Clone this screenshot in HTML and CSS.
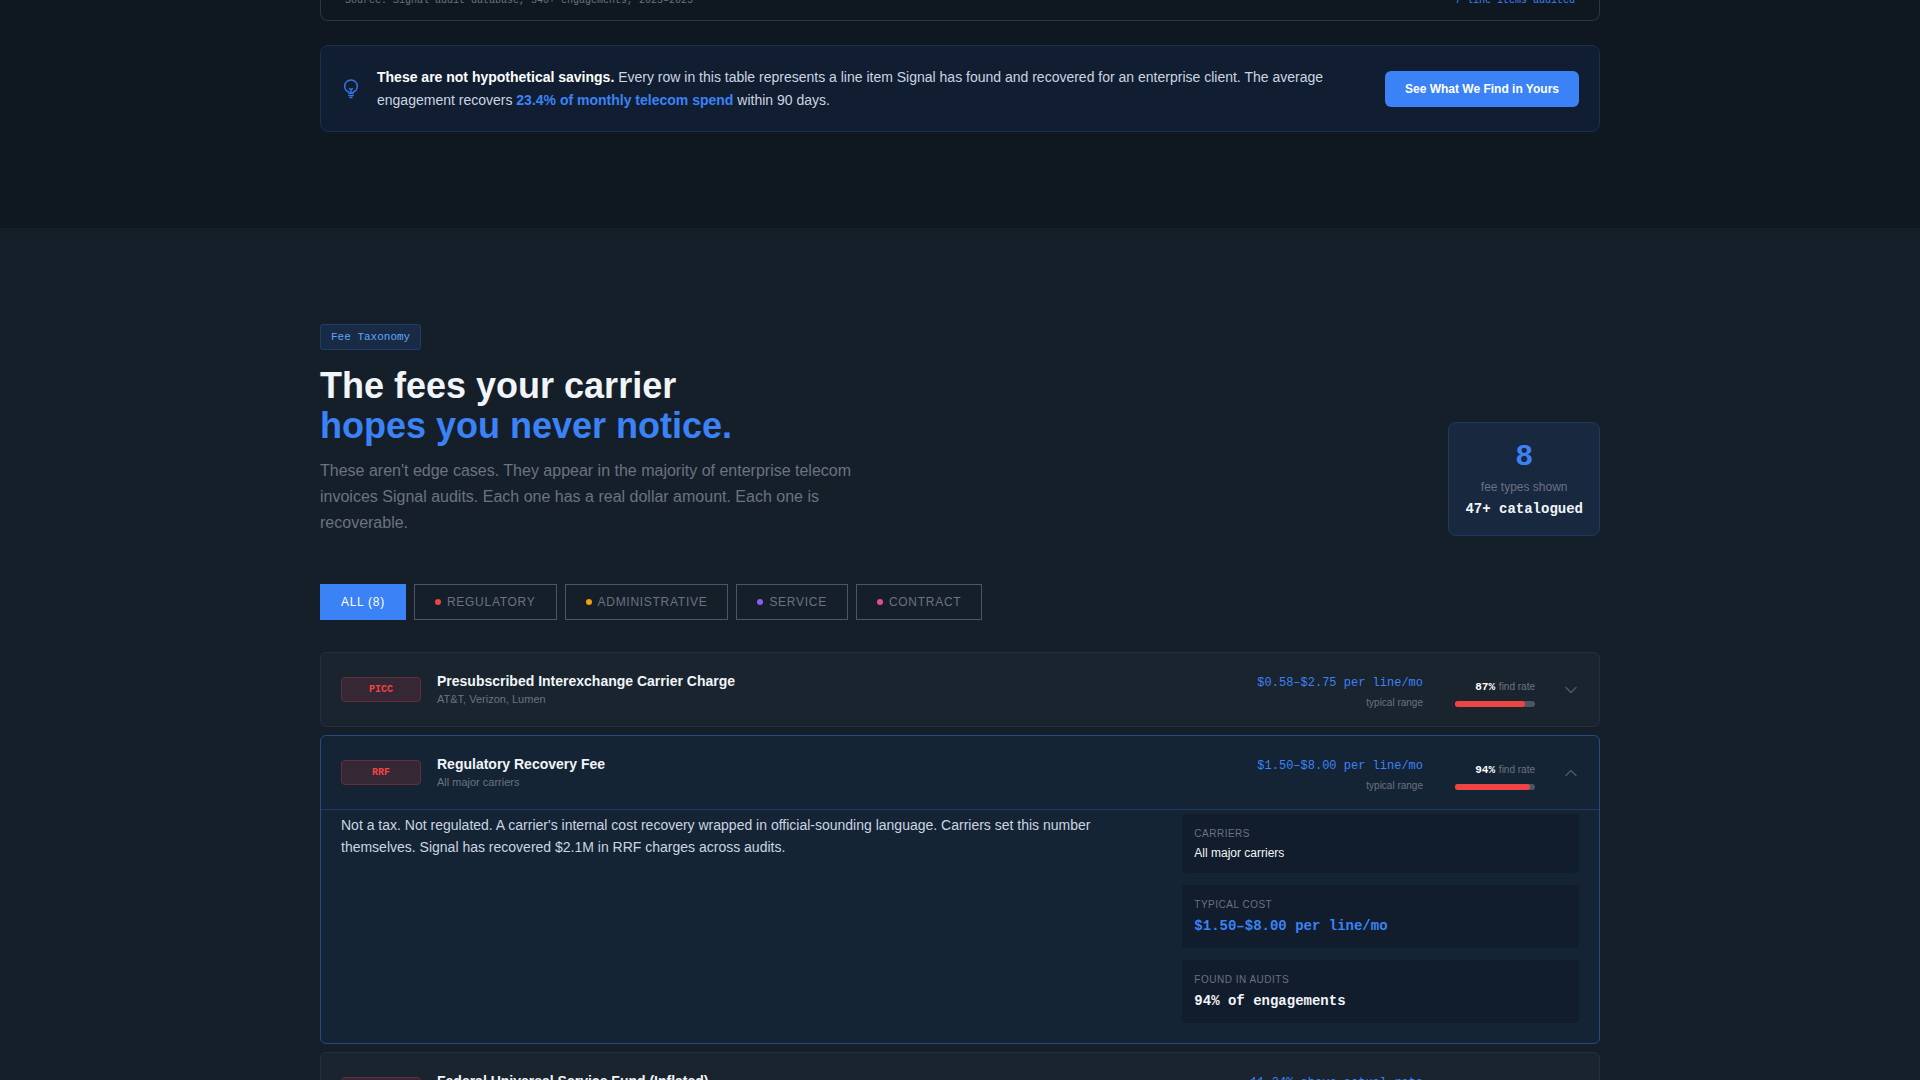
FILE: index.html
```html
<!DOCTYPE html>
<html lang="en">
<head>
    <meta charset="UTF-8">
    <meta name="viewport" content="width=device-width, initial-scale=1.0">
    <title>Signal - Fee Taxonomy</title>
    <link rel="stylesheet" href="styles.css">
</head>
<body>
    <section class="audit">
        <div class="container">
            <div class="table-footer">
                <span>Source: Signal audit database, 340+ engagements, 2023–2025</span>
                <span class="table-count">7 line items audited</span>
            </div>
            <div class="callout">
                <svg class="bulb" viewBox="0 0 20 22" fill="none" stroke="currentColor" stroke-width="1.5" stroke-linecap="round" stroke-linejoin="round" aria-hidden="true">
                    <path d="M7.800 15.200v-1.200C5.200 13 3.700 10.800 3.700 8.200a6.300 6.300 0 1 1 12.600 0c0 2.600-1.500 4.800-4.100 5.800v1.200z"/>
                    <path d="M8.600 10.600L10 11.600l1.400-1M10 11.800v3.400M7.800 17.400h4.400M9 19.600h2"/>
                </svg>
                <p><strong>These are not hypothetical savings.</strong> Every row in this table represents a line item Signal has found and recovered for an enterprise client. The average engagement recovers <b>23.4% of monthly telecom spend</b> within 90 days.</p>
                <button class="cta">See What We Find in Yours</button>
            </div>
        </div>
    </section>

    <section class="taxonomy">
        <div class="container">
            <div class="header">
                <div class="intro">
                    <span class="tag">Fee Taxonomy</span>
                    <h2>The fees your carrier<br><span>hopes you never notice.</span></h2>
                    <p>These aren't edge cases. They appear in the majority of enterprise telecom invoices Signal audits. Each one has a real dollar amount. Each one is recoverable.</p>
                </div>
                <div class="stat">
                    <div class="stat-number">8</div>
                    <div class="stat-label">fee types shown</div>
                    <div class="stat-total">47+ catalogued</div>
                </div>
            </div>

            <div class="filters">
                <button class="filter active">All (8)</button>
                <button class="filter"><i class="dot red"></i>Regulatory</button>
                <button class="filter"><i class="dot amber"></i>Administrative</button>
                <button class="filter"><i class="dot purple"></i>Service</button>
                <button class="filter"><i class="dot pink"></i>Contract</button>
            </div>

            <div class="fees">
                <div class="fee">
                    <button class="fee-head" aria-expanded="false">
                        <span class="code">PICC</span>
                        <span class="fee-name">
                            <span class="name">Presubscribed Interexchange Carrier Charge</span>
                            <span class="carriers">AT&amp;T, Verizon, Lumen</span>
                        </span>
                        <span class="range">
                            <span class="cost">$0.58–$2.75 per line/mo</span>
                            <span class="small">typical range</span>
                        </span>
                        <span class="rate">
                            <span class="small"><b>87%</b> find rate</span>
                            <span class="bar"><span class="fill" style="width: 87%"></span></span>
                        </span>
                        <svg class="chevron" viewBox="0 0 16 16" aria-hidden="true"><path d="M3 5.500l5 5 5-5"/></svg>
                    </button>
                </div>

                <div class="fee open">
                    <button class="fee-head" aria-expanded="true">
                        <span class="code">RRF</span>
                        <span class="fee-name">
                            <span class="name">Regulatory Recovery Fee</span>
                            <span class="carriers">All major carriers</span>
                        </span>
                        <span class="range">
                            <span class="cost">$1.50–$8.00 per line/mo</span>
                            <span class="small">typical range</span>
                        </span>
                        <span class="rate">
                            <span class="small"><b>94%</b> find rate</span>
                            <span class="bar"><span class="fill" style="width: 94%"></span></span>
                        </span>
                        <svg class="chevron" viewBox="0 0 16 16" aria-hidden="true"><path d="M3 10.500l5-5 5 5"/></svg>
                    </button>
                    <div class="detail">
                        <p>Not a tax. Not regulated. A carrier's internal cost recovery wrapped in official-sounding language. Carriers set this number themselves. Signal has recovered $2.1M in RRF charges across audits.</p>
                        <div class="facts">
                            <div class="fact">
                                <div class="fact-label">Carriers</div>
                                <div class="fact-text">All major carriers</div>
                            </div>
                            <div class="fact">
                                <div class="fact-label">Typical cost</div>
                                <div class="fact-value blue">$1.50–$8.00 per line/mo</div>
                            </div>
                            <div class="fact">
                                <div class="fact-label">Found in audits</div>
                                <div class="fact-value">94% of engagements</div>
                            </div>
                        </div>
                    </div>
                </div>

                <div class="fee">
                    <button class="fee-head" aria-expanded="false">
                        <span class="code">FUSF</span>
                        <span class="fee-name">
                            <span class="name">Federal Universal Service Fund (Inflated)</span>
                            <span class="carriers">All major carriers</span>
                        </span>
                        <span class="range">
                            <span class="cost">11–34% above actual rate</span>
                            <span class="small">typical range</span>
                        </span>
                        <span class="rate">
                            <span class="small"><b>78%</b> find rate</span>
                            <span class="bar"><span class="fill" style="width: 78%"></span></span>
                        </span>
                        <svg class="chevron" viewBox="0 0 16 16" aria-hidden="true"><path d="M3 5.500l5 5 5-5"/></svg>
                    </button>
                </div>
            </div>
        </div>
    </section>
</body>
</html>
```

FILE: styles.css
```css
* {
    box-sizing: border-box;
}
body {
    margin: 0;
    height: 100vh;
    overflow: hidden;
    font-family: "Liberation Sans", Arial, sans-serif;
    font-size: 14px;
    color: #f1f5f9;
    background: #151f2a;
}
h2, p {
    margin: 0;
}
button {
    font-family: inherit;
    cursor: pointer;
}
.container {
    max-width: 1280px;
    margin: 0 auto;
}

/* audit table end + callout */
.audit {
    background: #0f1721;
    padding-bottom: 96px;
    overflow: hidden;
}
.table-footer {
    display: flex;
    justify-content: space-between;
    margin-top: -19px;
    padding: 12px 24px;
    border: 1px solid #2c3643;
    border-top: none;
    border-radius: 0 0 8px 8px;
    font: 10px/15px "Liberation Mono", monospace;
    color: #6b7280;
}
.table-count {
    color: #3b82f6;
}
.callout {
    display: flex;
    align-items: center;
    gap: 16px;
    margin-top: 24px;
    padding: 20px 20px 19px;
    background: #111e31;
    border: 1px solid #1a2f4e;
    border-radius: 8px;
}
.callout p {
    flex: 1;
    line-height: 23px;
    color: #cbd5e1;
}
.callout strong {
    color: #fff;
}
.callout b {
    color: #3b82f6;
}
.bulb {
    width: 20px;
    height: 22px;
    color: #3572e0;
}
.cta {
    margin-left: 44px;
    padding: 0 20px;
    height: 36px;
    border: none;
    border-radius: 6px;
    background: #3b82f6;
    color: #fff;
    font-size: 12px;
    font-weight: bold;
}

/* fee taxonomy */
.taxonomy {
    padding: 96px 0;
}
.header {
    display: flex;
    justify-content: space-between;
    align-items: flex-end;
}
.intro {
    max-width: 560px;
}
.tag {
    display: inline-block;
    padding: 3px 10px;
    border: 1px solid #1f3d6b;
    border-radius: 3px;
    background: #182a44;
    color: #60a5fa;
    font: 11px/18px "Liberation Mono", monospace;
    vertical-align: top;
}
h2 {
    margin-top: 16px;
    font-size: 36px;
    line-height: 40px;
}
h2 span {
    color: #3b82f6;
}
.intro p {
    margin-top: 12px;
    font-size: 16px;
    line-height: 26px;
    color: #6b7280;
}
.stat {
    padding: 16px;
    border: 1px solid #1e3a62;
    border-radius: 8px;
    background: #18283f;
    text-align: center;
}
.stat-number {
    font: bold 30px/36px "Liberation Mono", monospace;
    color: #3b82f6;
}
.stat-label {
    margin: 2px 0;
    font-size: 12px;
    line-height: 20px;
    color: #6b7280;
}
.stat-total {
    font: bold 14px/20px "Liberation Mono", monospace;
}

.filters {
    display: flex;
    gap: 8px;
    margin: 48px 0 32px;
}
.filter {
    display: flex;
    align-items: center;
    gap: 6px;
    height: 36px;
    padding: 0 20px;
    border: 1px solid #4b5563;
    background: none;
    color: #6b7280;
    font-size: 12px;
    letter-spacing: 0.06em;
    text-transform: uppercase;
}
.filter.active {
    background: #3b82f6;
    border-color: #3b82f6;
    color: #fff;
}
.dot {
    width: 6px;
    height: 6px;
    border-radius: 50%;
}
.red {
    background: #ef4444;
}
.amber {
    background: #f59e0b;
}
.purple {
    background: #8b5cf6;
}
.pink {
    background: #ec4899;
}

.fees {
    display: flex;
    flex-direction: column;
    gap: 8px;
}
.fee {
    border: 1px solid #25303d;
    border-radius: 6px;
    background: #19242f;
}
.fee.open {
    border-color: #264a85;
    background: #152435;
}
.fee-head {
    display: flex;
    align-items: center;
    width: 100%;
    padding: 16px 20px;
    border: none;
    background: none;
    color: inherit;
    text-align: left;
}
.code {
    width: 80px;
    border: 1px solid #632e38;
    border-radius: 4px;
    background: #352733;
    color: #ef4444;
    font: bold 10px/23px "Liberation Mono", monospace;
    text-align: center;
}
.fee-name, .range, .rate {
    display: flex;
    flex-direction: column;
}
.fee-name {
    flex: 1;
    margin-left: 16px;
    padding-bottom: 2px;
}
.name {
    font-size: 14px;
    font-weight: bold;
    line-height: 20px;
}
.carriers {
    font-size: 11px;
    line-height: 16px;
    color: #6b7280;
}
.range {
    padding-top: 2px;
    text-align: right;
}
.cost {
    font: 12px/24px "Liberation Mono", monospace;
    color: #3b82f6;
}
.small {
    font-size: 10px;
    line-height: 15px;
    color: #6b7280;
}
.small b {
    margin-right: 1px;
    font-family: "Liberation Mono", monospace;
    font-size: 11px;
    color: #fff;
}
.rate {
    width: 80px;
    gap: 4px;
    margin: 0 28px 0 32px;
    padding-top: 4px;
    text-align: right;
}
.rate .small {
    line-height: 19px;
}
.bar {
    height: 6px;
    border-radius: 3px;
    background: #4b5563;
}
.fill {
    display: block;
    height: 6px;
    border-radius: 3px;
    background: #ef4444;
}
.chevron {
    width: 16px;
    height: 16px;
    fill: none;
    stroke: #4b5563;
    stroke-width: 1.5;
    stroke-linecap: round;
    stroke-linejoin: round;
}

.detail {
    display: grid;
    grid-template-columns: 2fr 1fr;
    gap: 48px;
    padding: 4px 20px 20px;
    border-top: 1px solid #1f3a63;
}
.detail p {
    line-height: 22px;
    color: #cbd5e1;
}
.facts {
    display: flex;
    flex-direction: column;
    gap: 12px;
}
.fact {
    padding: 12px 12px 11px;
    border-radius: 4px;
    background: #111c2c;
}
.fact-label {
    margin-bottom: 2px;
    font-size: 10px;
    line-height: 16px;
    letter-spacing: 0.5px;
    text-transform: uppercase;
    color: #6b7280;
}
.fact-text {
    font-size: 12px;
    line-height: 18px;
}
.fact-value {
    font: bold 14px/22px "Liberation Mono", monospace;
}
.blue {
    color: #3b82f6;
}
```
